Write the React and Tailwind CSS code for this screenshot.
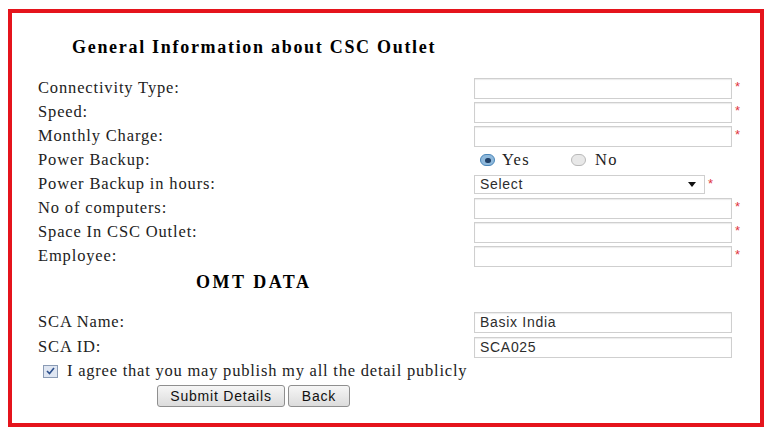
import React from 'react';

const serif = { fontFamily: '"Liberation Serif", "Times New Roman", serif' };
const sans = { fontFamily: '"Liberation Sans", Arial, sans-serif' };

const fields = [
  { label: 'Connectivity Type:', type: 'text' },
  { label: 'Speed:', type: 'text' },
  { label: 'Monthly Charge:', type: 'text' },
  { label: 'Power Backup:', type: 'radio' },
  { label: 'Power Backup in hours:', type: 'select' },
  { label: 'No of computers:', type: 'text' },
  { label: 'Space In CSC Outlet:', type: 'text' },
  { label: 'Employee:', type: 'text' },
];

function Star() {
  return <span className="text-[#e0353d] text-[13px] leading-none self-start mt-[2px] ml-[3px]" style={sans}>*</span>;
}

function TextBox({ value, star = true }) {
  return (
    <div className="flex items-center">
      <div
        className="w-[258px] h-[21px] border border-[#cfcfcf] bg-white shadow-[inset_0_1px_1px_rgba(0,0,0,0.08)] flex items-center px-[5px] text-[14px] tracking-[0.7px] text-[#2d2d2d]"
        style={sans}
      >
        {value}
      </div>
      {star && <Star />}
    </div>
  );
}

function Radio({ checked }) {
  return (
    <span
      className={`w-[15px] h-[12px] rounded-full border flex items-center justify-center ${
        checked ? 'border-[#4a86b8] bg-[#8fb9dc]' : 'border-[#b9b9b9] bg-[#e8e8e8]'
      }`}
    >
      {checked && <span className="w-[6px] h-[5px] rounded-full bg-[#1f3f66]" />}
    </span>
  );
}

function Control({ type }) {
  if (type === 'radio') {
    return (
      <div className="flex items-center text-[16.5px] tracking-[1.3px] text-[#222] pl-[6px]" style={serif}>
        <Radio checked />
        <span className="ml-[7px]">Yes</span>
        <span className="ml-[41px]"><Radio /></span>
        <span className="ml-[9px]">No</span>
      </div>
    );
  }
  if (type === 'select') {
    return (
      <div className="flex items-center">
        <div
          className="w-[231px] h-[19px] border border-[#cfcfcf] bg-white flex items-center justify-between pl-[5px] pr-[8px] text-[14px] tracking-[0.7px] text-[#2d2d2d]"
          style={sans}
        >
          <span>Select</span>
          <svg width="8" height="5" viewBox="0 0 8 5">
            <path d="M0 0 L8 0 L4 5 Z" fill="#111" />
          </svg>
        </div>
        <Star />
      </div>
    );
  }
  return <TextBox />;
}

export default function App() {
  return (
    <div className="w-[768px] h-[432px] bg-white pt-[9px] pl-[8px]">
      <div className="w-[756px] h-[418px] border-4 border-[#e5141c] pl-[26px] text-[#222]" style={serif}>
        <h1 className="mt-[24px] pl-[34px] text-[18px] leading-[21px] tracking-[1.7px] font-bold text-black">
          General Information about CSC Outlet
        </h1>

        <div className="mt-[18px]">
          {fields.map(f => (
            <div key={f.label} className="flex items-center h-[24px]">
              <div className="w-[436px] text-[16.5px] tracking-[0.85px]">{f.label}</div>
              <Control type={f.type} />
            </div>
          ))}
        </div>

        <div className="mt-[2px] h-[24px] flex items-center pl-[158px] text-[18px] tracking-[2.5px] font-bold text-black">
          OMT DATA
        </div>

        <div className="mt-[16px] flex items-center h-[25px]">
          <div className="w-[436px] text-[16.5px] tracking-[0.85px]">SCA Name:</div>
          <TextBox value="Basix India" star={false} />
        </div>
        <div className="flex items-center h-[24px]">
          <div className="w-[436px] text-[16.5px] tracking-[0.85px]">SCA ID:</div>
          <TextBox value="SCA025" star={false} />
        </div>

        <div className="flex items-center h-[24px] pl-[5px]">
          <span className="w-[15px] h-[13px] border border-[#8a9bb5] bg-[#dfe6f2] flex items-center justify-center">
            <svg width="9" height="8" viewBox="0 0 9 8">
              <path d="M1 4 L3.5 6.5 L8 1" stroke="#2c4f8c" strokeWidth="1.6" fill="none" />
            </svg>
          </span>
          <span className="ml-[9px] text-[16.5px] tracking-[0.78px]">I agree that you may publish my all the detail publicly</span>
        </div>

        <div className="mt-[2px] flex pl-[119px] gap-[3px]" style={sans}>
          <button className="w-[128px] h-[22px] rounded-[3px] border border-[#8f8f8f] bg-gradient-to-b from-[#f6f6f6] to-[#dcdcdc] text-[14px] tracking-[0.8px] text-[#111]">
            Submit Details
          </button>
          <button className="w-[62px] h-[22px] rounded-[3px] border border-[#8f8f8f] bg-gradient-to-b from-[#f6f6f6] to-[#dcdcdc] text-[14px] tracking-[0.8px] text-[#111]">
            Back
          </button>
        </div>
      </div>
    </div>
  );
}
